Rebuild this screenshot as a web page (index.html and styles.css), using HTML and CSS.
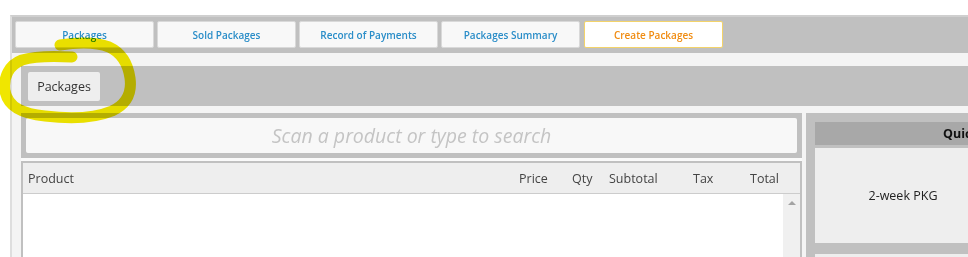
FILE: index.html
```html
<!DOCTYPE html>
<html>
<head>
<meta charset="utf-8">
<link rel="stylesheet" href="styles.css">
</head>
<body>
<div class="page">
  <div class="tabbar">
    <div class="tab">Packages</div>
    <div class="tab">Sold Packages</div>
    <div class="tab">Record of Payments</div>
    <div class="tab">Packages Summary</div>
    <div class="tab active">Create Packages</div>
  </div>
  <div class="content">
    <div class="subbar">
      <div class="btn">Packages</div>
    </div>
    <div class="main">
      <div class="left">
        <div class="searchwrap">
          <div class="search">Scan a product or type to search</div>
        </div>
        <div class="table">
          <div class="thead">
            <span class="c-product">Product</span>
            <span class="c-price">Price</span>
            <span class="c-qty">Qty</span>
            <span class="c-sub">Subtotal</span>
            <span class="c-tax">Tax</span>
            <span class="c-total">Total</span>
          </div>
          <div class="tbody">
            <div class="scroll"><span class="arrow"></span></div>
          </div>
        </div>
      </div>
      <div class="right">
        <div class="qhead">Quick Packages</div>
        <div class="cards">
          <div class="card">2-week PKG</div>
          <div class="card">1-month PKG</div>
          <div class="card">3-month PKG</div>
          <div class="card">6-month PKG</div>
        </div>
      </div>
    </div>
  </div>
</div>
<svg class="mark" width="140" height="130" viewBox="0 0 140 130">
  <path d="M72 57 C55 56 35 56 22 60 C9 65 3 77 5 91 C8 108 24 114 45 116 C70 119 95 118 112 111 C127 104 132 92 130 78 C128 64 122 53 109 47 C96 42 80 42 60 45" fill="none" stroke="#f0e600" stroke-width="11" stroke-linecap="round"/>
</svg>
</body>
</html>
```

FILE: styles.css
```css
html, body {
  margin: 0;
  padding: 0;
  background: #ffffff;
  overflow: hidden;
  width: 968px;
  height: 257px;
  font-family: "Open Sans", "Liberation Sans", sans-serif;
}

.page {
  margin-top: 15px;
  margin-left: 10px;
  border-top: 2px solid #cfcfcf;
  border-left: 2px solid #dedede;
  background: #f4f4f4;
  height: 240px;
  overflow: hidden;
}

.tabbar {
  background: #c0c0c0;
  height: 36px;
  box-sizing: border-box;
  padding: 4px 0 0 3px;
  display: flex;
  gap: 3px;
}

.tab {
  width: 139px;
  height: 27px;
  box-sizing: border-box;
  background: #f8f8f8;
  border: 1px solid #d9d9d9;
  border-radius: 2px;
  color: #2a8dc8;
  font-size: 10px;
  font-weight: 600;
  display: flex;
  align-items: center;
  justify-content: center;
  flex: 0 0 auto;
}

.tab.active {
  background: #ffffff;
  border-color: #f3d36a;
  color: #f08c12;
  margin-left: 1px;
}

.content {
  padding: 13px 0 0 9px;
}

.subbar {
  background: #c0c0c0;
  height: 40px;
  box-sizing: border-box;
  padding: 6px 7px;
}

.btn {
  width: 72px;
  height: 29px;
  background: #eeeeee;
  border-radius: 2px;
  color: #333333;
  font-size: 12.5px;
  display: flex;
  align-items: center;
  justify-content: center;
}

.main {
  margin-top: 7px;
  display: flex;
  gap: 4px;
}

.left {
  flex: 0 0 781px;
  background: #fafafa;
}

.searchwrap {
  background: #c0c0c0;
  padding: 5px;
}

.search {
  height: 35px;
  background: #f8f8f8;
  border-radius: 2px;
  color: #c4c4c4;
  font-style: italic;
  font-size: 19.5px;
  display: flex;
  align-items: center;
  justify-content: center;
  padding-bottom: 1px;
  box-sizing: border-box;
}

.table {
  margin-top: 3px;
  border: 2px solid #c0c0c0;
  border-bottom: none;
  background: #ffffff;
}

.thead {
  height: 31px;
  background: #eeeeee;
  border-bottom: 1px solid #cccccc;
  position: relative;
  color: #444444;
  font-size: 12.5px;
  display: flex;
  align-items: center;
  padding-top: 1px;
  box-sizing: border-box;
}

.thead span {
  position: absolute;
}

.c-product { left: 5px; }
.c-price { left: 496px; }
.c-qty { left: 549px; }
.c-sub { left: 586px; }
.c-tax { left: 670px; }
.c-total { left: 727px; }

.tbody {
  height: 80px;
  display: flex;
  justify-content: flex-end;
}

.scroll {
  width: 17px;
  background: #f0f0f0;
  position: relative;
}

.arrow {
  position: absolute;
  left: 5px;
  top: 7px;
  width: 0;
  height: 0;
  border-left: 4px solid transparent;
  border-right: 4px solid transparent;
  border-bottom: 4px solid #a3a3a3;
}

.right {
  flex: 0 0 400px;
  background: #c0c0c0;
  padding: 9px;
  box-sizing: border-box;
}

.qhead {
  height: 23px;
  background: #a8a8a8;
  color: #111111;
  font-weight: 700;
  font-size: 12.5px;
  display: flex;
  align-items: center;
  justify-content: flex-start;
  padding-left: 128px;
}

.cards {
  margin-top: 3px;
  display: grid;
  grid-template-columns: 176px 176px;
  column-gap: 8px;
  row-gap: 11px;
}

.card {
  height: 95px;
  background: #eeeeee;
  color: #222222;
  font-size: 12.5px;
  display: flex;
  align-items: center;
  justify-content: center;
}

.mark {
  position: absolute;
  left: 0;
  top: 0;
  mix-blend-mode: multiply;
  pointer-events: none;
}
```
